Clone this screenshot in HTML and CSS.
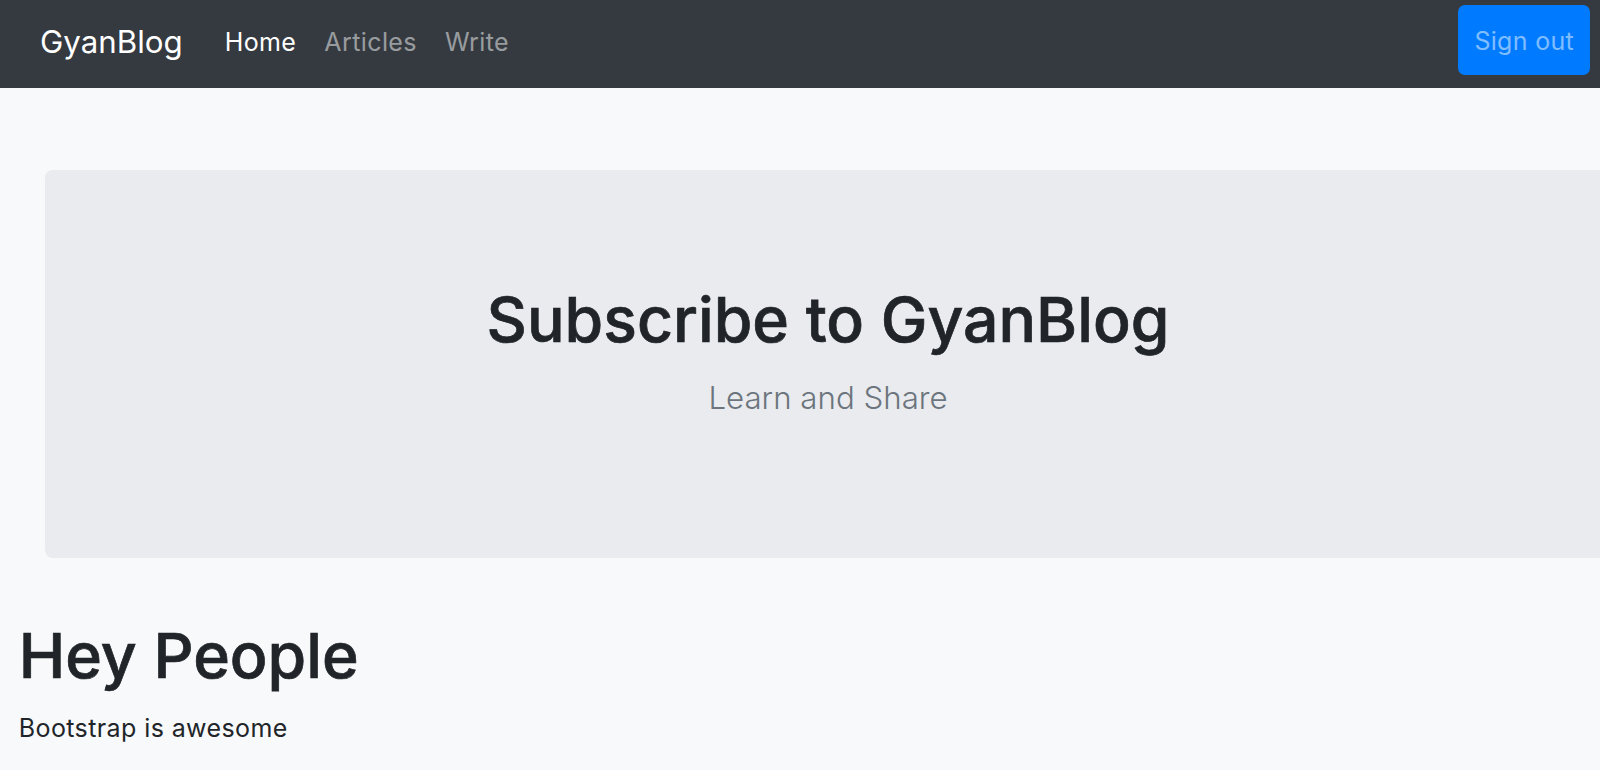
FILE: index.html
```html
<!DOCTYPE html>
<html lang="en">
<head>
<meta charset="utf-8">
<title>GyanBlog</title>
<link rel="stylesheet" href="styles.css">
</head>
<body>
<div class="page">
  <nav class="navbar">
    <a class="brand" href="#">GyanBlog</a>
    <ul class="nav">
      <li><a class="nav-link active" href="#">Home</a></li>
      <li><a class="nav-link" href="#">Articles</a></li>
      <li><a class="nav-link" href="#">Write</a></li>
    </ul>
    <a class="btn-signout" href="#">Sign out</a>
  </nav>
  <main class="content">
    <section class="jumbotron">
      <h1 class="jumbo-title">Subscribe to GyanBlog</h1>
      <p class="lead">Learn and Share</p>
    </section>
    <h1 class="title">Hey People</h1>
    <p class="text">Bootstrap is awesome</p>
  </main>
</div>
</body>
</html>
```
FILE: styles.css
```css
html, body {
  margin: 0;
  padding: 0;
  background: #f8f9fa;
  font-family: Inter, "Noto Sans", "Liberation Sans", sans-serif;
  color: #212529;
}

.page {
  width: 100%;
  min-height: 770px;
  overflow: hidden;
}

.navbar {
  box-sizing: border-box;
  height: 88px;
  background: #343a40;
  display: flex;
  align-items: center;
  padding: 5px 10px 13px 40px;
}

.brand {
  font-size: 31.25px;
  line-height: 1.5;
  color: #fff;
  text-decoration: none;
  margin: 5px 28px 0 0;
}

.nav {
  list-style: none;
  margin: 5px 0 0;
  padding: 0;
  display: flex;
}

.nav-link {
  display: block;
  padding: 0 14px;
  font-size: 25px;
  line-height: 1.5;
  letter-spacing: 0.4px;
  color: rgba(255, 255, 255, 0.5);
  text-decoration: none;
}

.nav-link.active {
  color: #fff;
}

.btn-signout {
  margin-left: auto;
  box-sizing: border-box;
  height: 70px;
  display: flex;
  align-items: center;
  padding: 4px 16px 0;
  background: #007bff;
  border-radius: 7px;
  font-size: 25px;
  line-height: 1.5;
  letter-spacing: 0.3px;
  color: rgba(255, 255, 255, 0.5);
  text-decoration: none;
}

.content {
  padding: 0 18.75px;
}

.jumbotron {
  box-sizing: border-box;
  width: 1566px;
  height: 388px;
  margin: 82px 0 60px 26.25px;
  padding: 112px 50px 0;
  background: #e9ebef;
  border-radius: 7.5px;
  text-align: center;
}

.jumbo-title {
  margin: 0 0 18px;
  font-size: 62.5px;
  font-weight: 500;
  line-height: 1.2;
  color: #212529;
  -webkit-text-stroke: 0.7px #212529;
}

.lead {
  margin: 0;
  font-size: 31.25px;
  font-weight: 300;
  line-height: 1.5;
  color: #6c757d;
}

.title {
  margin: 0 0 17px;
  font-size: 62.5px;
  font-weight: 500;
  line-height: 1.2;
  color: #212529;
  -webkit-text-stroke: 0.7px #212529;
}

.text {
  margin: 0;
  font-size: 25px;
  line-height: 1.5;
  letter-spacing: 0.4px;
  color: #212529;
}
```
